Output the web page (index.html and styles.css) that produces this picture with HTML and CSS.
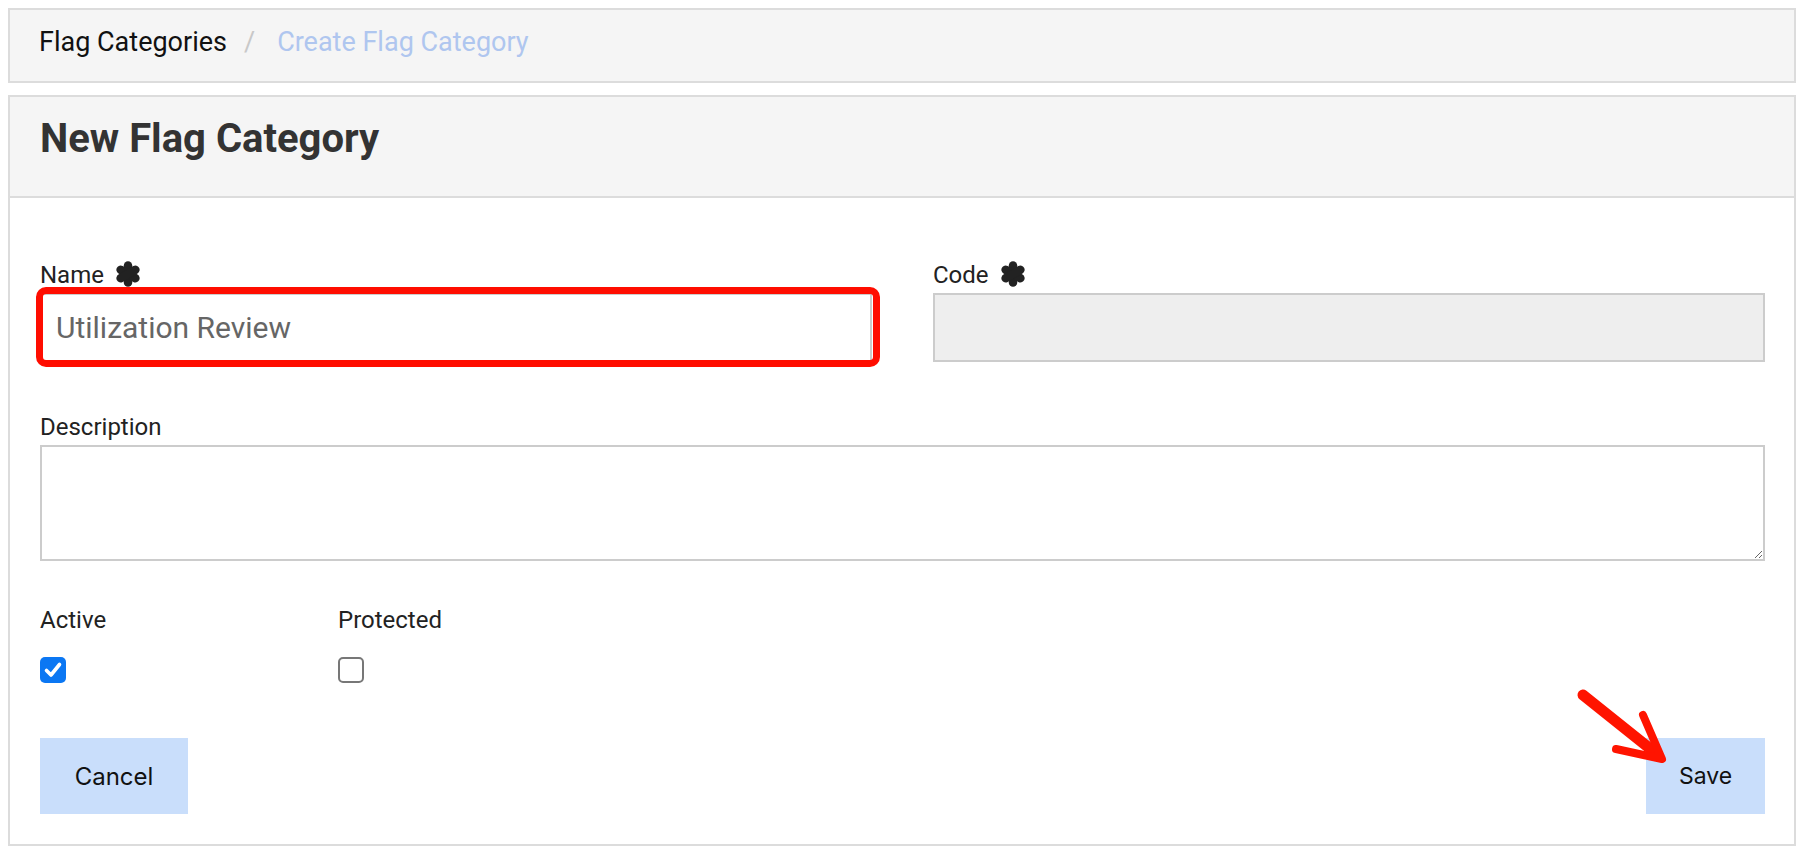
FILE: index.html
```html
<!DOCTYPE html>
<html lang="en">
<head>
<meta charset="utf-8">
<title>New Flag Category</title>
<link rel="stylesheet" href="styles.css">
</head>
<body>
<nav class="crumbs">
  <a class="crumb-link" href="#">Flag Categories</a><span class="crumb-sep">/</span><span class="crumb-current">Create Flag Category</span>
</nav>

<section class="card">
  <header class="card-head">
    <h1 class="card-title">New Flag Category</h1>
  </header>
  <form class="card-body">
    <div class="row-two">
      <div class="field">
        <label class="field-label">Name
          <svg class="req" viewBox="0 0 24 26" width="24" height="26" aria-hidden="true">
            <g stroke="#222" stroke-width="8.5" stroke-linecap="round">
              <line x1="12" y1="4.5" x2="12" y2="21.5"/>
              <line x1="4.6" y1="8.75" x2="19.4" y2="17.25"/>
              <line x1="4.6" y1="17.25" x2="19.4" y2="8.75"/>
            </g>
          </svg>
        </label>
        <div class="input-wrap">
          <input class="text-input" type="text" value="Utilization Review">
          <span class="highlight"></span>
        </div>
      </div>
      <div class="field">
        <label class="field-label">Code
          <svg class="req" viewBox="0 0 24 26" width="24" height="26" aria-hidden="true">
            <g stroke="#222" stroke-width="8.5" stroke-linecap="round">
              <line x1="12" y1="4.5" x2="12" y2="21.5"/>
              <line x1="4.6" y1="8.75" x2="19.4" y2="17.25"/>
              <line x1="4.6" y1="17.25" x2="19.4" y2="8.75"/>
            </g>
          </svg>
        </label>
        <input class="text-input is-disabled" type="text" disabled>
      </div>
    </div>

    <div class="field field-desc">
      <label class="field-label">Description</label>
      <textarea class="text-area"></textarea>
    </div>

    <div class="checks">
      <div class="check-field">
        <span class="field-label">Active</span>
        <span class="box box-on">
          <svg viewBox="0 0 26 26" width="26" height="26" aria-hidden="true">
            <polyline points="6.5,13.5 11,18 19.5,7.5" fill="none" stroke="#fff" stroke-width="3.6" stroke-linecap="round" stroke-linejoin="round"/>
          </svg>
        </span>
      </div>
      <div class="check-field">
        <span class="field-label">Protected</span>
        <span class="box"></span>
      </div>
    </div>

    <div class="actions">
      <button class="btn btn-cancel" type="button">Cancel</button>
      <button class="btn btn-save" type="button">Save</button>
      <svg class="arrow" viewBox="0 0 110 90" width="110" height="90" aria-hidden="true">
        <g stroke="#ff1400" stroke-linecap="round" stroke-linejoin="round" fill="none">
          <line x1="13" y1="13" x2="88" y2="73" stroke-width="11"/>
          <polyline points="73,33 92,77 46,67" stroke-width="8"/>
        </g>
      </svg>
    </div>
  </form>
</section>
</body>
</html>
```

FILE: styles.css
```css
* { box-sizing: border-box; }

body {
  margin: 8px;
  background: #fff;
  font-family: Roboto, "Liberation Sans", Arial, sans-serif;
  color: #222;
}

/* breadcrumb */
.crumbs {
  display: flex;
  align-items: center;
  background: #f5f5f5;
  border: 2px solid #dcdcdc;
  padding: 16px 29px 23px 29px;
  font-size: 27px;
  font-weight: 400;
  line-height: 32px;
}
.crumb-link { color: #111; text-decoration: none; }
.crumb-sep { color: #c8c8c8; margin: 0 22px 0 17px; }
.crumb-current { color: #afc6ef; }

/* card */
.card {
  margin-top: 12px;
  border: 2px solid #dcdcdc;
  background: #fff;
}
.card-head {
  background: #f5f5f5;
  border-bottom: 2px solid #dcdcdc;
  padding: 18px 29px 33px 30px;
}
.card-title {
  margin: 0;
  font-size: 40px;
  line-height: 48px;
  font-weight: 700;
  color: #333;
}

.card-body {
  padding: 63px 29px 30px 30px;
}

.field { display: flex; flex-direction: column; }
.field-label {
  display: flex;
  align-items: center;
  gap: 12px;
  font-size: 24px;
  line-height: 28px;
  height: 28px;
  color: #222;
}
.req { display: block; margin-top: -3px; }

.row-two {
  display: grid;
  grid-template-columns: 1fr 1fr;
  column-gap: 61px;
  margin-bottom: 51px;
}

.field .field-label { margin-bottom: 4px; }

.input-wrap { position: relative; }

.text-input {
  display: block;
  width: 100%;
  height: 69px;
  border: 2px solid #ccc;
  border-radius: 0;
  background: #fff;
  padding: 0 14px;
  font-family: Roboto, "Liberation Sans", Arial, sans-serif;
  font-size: 30px;
  color: #666;
  outline: none;
}
.text-input.is-disabled { background: #eee; }

.highlight {
  position: absolute;
  left: -4px;
  top: -6px;
  right: -8px;
  bottom: -5px;
  border: 7px solid #ff0d00;
  border-radius: 10px;
  pointer-events: none;
}

.field-desc { margin-bottom: 45px; }
.text-area {
  display: block;
  width: 100%;
  height: 116px;
  border: 2px solid #ccc;
  border-radius: 0;
  padding: 8px 12px;
  font-family: Roboto, "Liberation Sans", Arial, sans-serif;
  font-size: 24px;
  resize: vertical;
  outline: none;
}

.checks {
  display: grid;
  grid-template-columns: 298px 298px;
  margin-bottom: 55px;
}
.check-field { display: flex; flex-direction: column; }
.check-field .field-label { margin-bottom: 23px; }
.box {
  display: block;
  width: 26px;
  height: 26px;
  border: 2px solid #777;
  border-radius: 5px;
  background: #fff;
}
.box-on {
  border: none;
  background: #0b77f3;
}
.box-on svg { display: block; }

.actions {
  position: relative;
  display: flex;
  justify-content: space-between;
  align-items: center;
}
.btn {
  height: 76px;
  padding: 0;
  border: none;
  border-radius: 0;
  background: #c9defb;
  color: #111;
  font-family: Inter, "Noto Sans", "Liberation Sans", sans-serif;
  font-size: 24px;
  text-align: center;
  cursor: pointer;
}
.btn-cancel { width: 148px; }
.btn-save { width: 119px; font-size: 23px; }

.arrow {
  position: absolute;
  right: 85px;
  top: -56px;
  display: block;
}
```
